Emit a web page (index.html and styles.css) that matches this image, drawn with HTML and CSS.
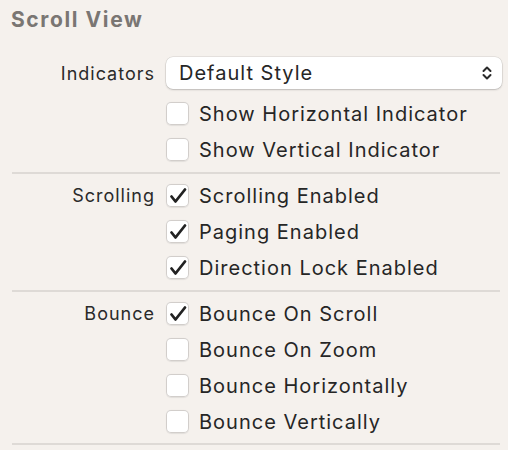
FILE: index.html
```html
<!DOCTYPE html>
<html>
<head>
<meta charset="utf-8">
<link rel="stylesheet" href="styles.css">
</head>
<body>
<div class="panel">
  <h1 class="title">Scroll View</h1>

  <section class="section first">
    <div class="row popup-row">
      <div class="label">Indicators</div>
      <div class="popup">
        <span class="popup-text">Default Style</span>
        <svg class="chevrons" width="10" height="14" viewBox="0 0 10 14"><path d="M1.5 5 L5 1.5 L8.5 5 M1.5 9 L5 12.5 L8.5 9" fill="none" stroke="#2a2a2a" stroke-width="2" stroke-linecap="round" stroke-linejoin="round"/></svg>
      </div>
    </div>
    <div class="row"><div class="label"></div><div class="check"><span class="box"></span><span class="text">Show Horizontal Indicator</span></div></div>
    <div class="row"><div class="label"></div><div class="check"><span class="box"></span><span class="text">Show Vertical Indicator</span></div></div>
  </section>

  <section class="section">
    <div class="row"><div class="label">Scrolling</div><div class="check"><span class="box on"><svg width="23" height="23" viewBox="0 0 23 23"><path d="M5.5 12.5 L9.5 17.5 L19 5.5" fill="none" stroke="#222" stroke-width="2.8" stroke-linecap="round" stroke-linejoin="round"/></svg></span><span class="text">Scrolling Enabled</span></div></div>
    <div class="row"><div class="label"></div><div class="check"><span class="box on"><svg width="23" height="23" viewBox="0 0 23 23"><path d="M5.5 12.5 L9.5 17.5 L19 5.5" fill="none" stroke="#222" stroke-width="2.8" stroke-linecap="round" stroke-linejoin="round"/></svg></span><span class="text">Paging Enabled</span></div></div>
    <div class="row"><div class="label"></div><div class="check"><span class="box on"><svg width="23" height="23" viewBox="0 0 23 23"><path d="M5.5 12.5 L9.5 17.5 L19 5.5" fill="none" stroke="#222" stroke-width="2.8" stroke-linecap="round" stroke-linejoin="round"/></svg></span><span class="text">Direction Lock Enabled</span></div></div>
  </section>

  <section class="section last">
    <div class="row"><div class="label">Bounce</div><div class="check"><span class="box on"><svg width="23" height="23" viewBox="0 0 23 23"><path d="M5.5 12.5 L9.5 17.5 L19 5.5" fill="none" stroke="#222" stroke-width="2.8" stroke-linecap="round" stroke-linejoin="round"/></svg></span><span class="text">Bounce On Scroll</span></div></div>
    <div class="row"><div class="label"></div><div class="check"><span class="box"></span><span class="text">Bounce On Zoom</span></div></div>
    <div class="row"><div class="label"></div><div class="check"><span class="box"></span><span class="text">Bounce Horizontally</span></div></div>
    <div class="row"><div class="label"></div><div class="check"><span class="box"></span><span class="text">Bounce Vertically</span></div></div>
  </section>
</div>
</body>
</html>
```
FILE: styles.css
```css
html, body {
  margin: 0;
  padding: 0;
  background: #f5f1ed;
}
body {
  width: 508px;
  height: 450px;
  overflow: hidden;
  font-family: Inter, "Liberation Sans", sans-serif;
  color: #262626;
}
.panel {
  padding-top: 8px;
}
.title {
  margin: 0 0 0 11px;
  font-size: 21px;
  line-height: 24px;
  font-weight: 700;
  letter-spacing: 1.6px;
  color: #7a7673;
}
.section {
  margin: 0 8px 0 12px;
  padding: 3.5px 0 4.5px;
  border-bottom: 2px solid #dedad6;
}
.section.first {
  padding-top: 25px;
}
.section.last {
  padding-bottom: 3.5px;
}
.row {
  display: flex;
  align-items: center;
  height: 36px;
}
.popup-row {
  height: 32px;
  margin-bottom: 6.5px;
}
.label {
  flex: none;
  width: 144px;
  box-sizing: border-box;
  padding-right: 1px;
  margin-right: 10px;
  text-align: right;
  font-size: 18px;
  letter-spacing: 1px;
  color: #2a2a2a;
}
.popup {
  flex: none;
  width: 336px;
  height: 32px;
  margin-right: -2.5px;
  box-sizing: border-box;
  background: #fff;
  border-radius: 7px;
  box-shadow: 0 0 0 0.5px rgba(0,0,0,0.12), 0 1px 2px rgba(0,0,0,0.18);
  display: flex;
  align-items: center;
  padding: 0 10px 0 13px;
}
.popup-text {
  flex: 1;
  font-size: 20px;
  letter-spacing: 1px;
}
.chevrons {
  flex: none;
}
.check {
  display: flex;
  align-items: center;
}
.box {
  flex: none;
  width: 23px;
  height: 23px;
  box-sizing: border-box;
  background: #fff;
  border-radius: 5px;
  box-shadow: inset 0 0 0 1px #d2cecb, 0 0.5px 1px rgba(0,0,0,0.08);
  margin-right: 10px;
  display: flex;
}
.text {
  font-size: 20px;
  letter-spacing: 1px;
}
```
